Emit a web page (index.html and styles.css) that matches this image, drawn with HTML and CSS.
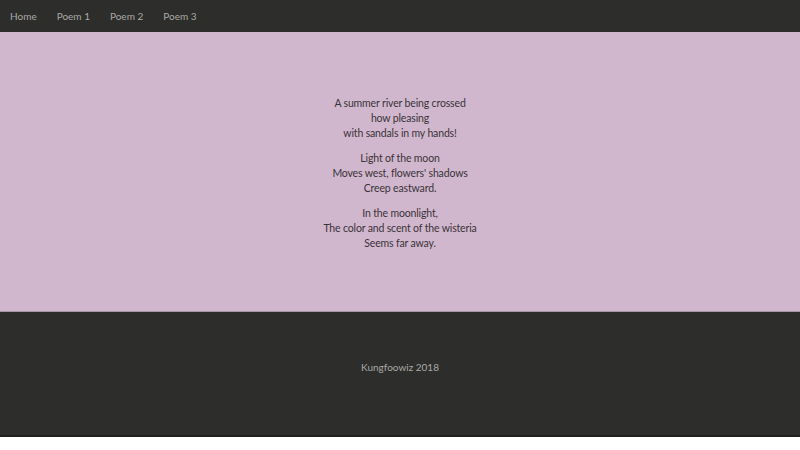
FILE: index.html
```html
<!DOCTYPE html>
<html>
<head>
<meta charset="utf-8">
<link rel="stylesheet" href="styles.css">
</head>
<body>
<nav class="nav">
  <a class="nav-link" href="#">Home</a>
  <a class="nav-link" href="#">Poem 1</a>
  <a class="nav-link" href="#">Poem 2</a>
  <a class="nav-link" href="#">Poem 3</a>
</nav>
<main class="poems">
  <p class="stanza">A summer river being crossed<br>how pleasing<br>with sandals in my hands!</p>
  <p class="stanza">Light of the moon<br>Moves west, flowers' shadows<br>Creep eastward.</p>
  <p class="stanza">In the moonlight,<br>The color and scent of the wisteria<br>Seems far away.</p>
</main>
<footer class="footer">
  <p class="footer-text">Kungfoowiz 2018</p>
</footer>
</body>
</html>
```
FILE: styles.css
```css
html, body {
  margin: 0;
  padding: 0;
  background: #ffffff;
  font-family: Lato, "Open Sans", sans-serif;
  font-size: 10.5px;
}
.nav {
  height: 32px;
  background: #2d2d2b;
  display: flex;
  align-items: center;
  gap: 20px;
  padding: 0 10px;
  box-sizing: border-box;
}
.nav-link {
  color: #a9a9a7;
  text-decoration: none;
  font-size: 10px;
}
.poems {
  background: #d1b7cd;
  height: 280px;
  padding-top: 4px;
  display: flex;
  flex-direction: column;
  justify-content: center;
  align-items: center;
  gap: 10px;
  color: #3a3339;
  box-sizing: border-box;
  border-bottom: 1px solid #a897a5;
}
.stanza {
  margin: 0;
  text-align: center;
  line-height: 15px;
  letter-spacing: -0.15px;
}
.footer {
  background: #2d2d2b;
  height: 125px;
  box-sizing: border-box;
  padding-top: 48px;
  border-bottom: 2px solid #1f1f1d;
}
.footer-text {
  margin: 0;
  text-align: center;
  line-height: 15px;
  font-size: 10px;
  color: #a9a9a7;
}
```
